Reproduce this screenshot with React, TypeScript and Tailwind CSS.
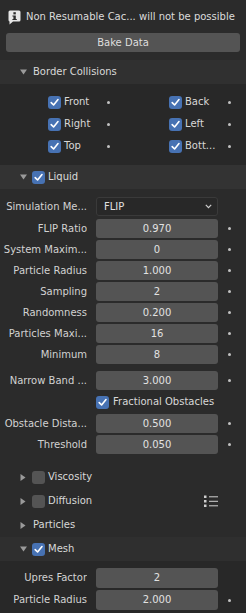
import React from "react";

const font = "font-['DejaVu_Sans',sans-serif]";

function Dot() {
  return <span className="block w-[3px] h-[3px] rounded-full bg-[#c2c2c2] shrink-0" />;
}

function Check({ on = true }: { on?: boolean }) {
  return (
    <span
      className={`flex items-center justify-center w-[13px] h-[13px] rounded-[3px] shrink-0 ${
        on ? "bg-[#4772b3]" : "bg-[#545454]"
      }`}
    >
      {on && (
        <svg width="11" height="11" viewBox="0 0 11 11">
          <path d="M2.2 5.6 L4.6 8 L9 2.6" fill="none" stroke="#fff" strokeWidth="1.6" strokeLinecap="round" strokeLinejoin="round" />
        </svg>
      )}
    </span>
  );
}

function Arrow({ open }: { open: boolean }) {
  return open ? (
    <svg width="7" height="6" viewBox="0 0 7 6" className="shrink-0">
      <path d="M0 0.5 H7 L3.5 5.5 Z" fill="#9a9a9a" />
    </svg>
  ) : (
    <svg width="6" height="7" viewBox="0 0 6 7" className="shrink-0">
      <path d="M0.5 0 V7 L5.5 3.5 Z" fill="#9a9a9a" />
    </svg>
  );
}

function Field({ label, value, dot = true, tall = false }: { label: string; value: string; dot?: boolean; tall?: boolean }) {
  return (
    <div className={`flex items-center ${tall ? "h-[20px]" : "h-[19px]"}`}>
      <div className="w-[87px] text-right whitespace-nowrap overflow-hidden text-[#d2d2d2]">{label}</div>
      <div className="ml-[9px] w-[122px] h-full rounded-[3px] bg-[#545454] flex items-center justify-center text-[#e2e2e2]">
        {value}
      </div>
      {dot && (
        <span className="ml-[10px]">
          <Dot />
        </span>
      )}
    </div>
  );
}

function BoxItem({ label }: { label: string }) {
  return (
    <div className="flex items-center w-[63px]">
      <Check />
      <span className="ml-[3px] flex-1 whitespace-nowrap text-[#d8d8d8]">{label}</span>
      <span className="mr-[1px]">
        <Dot />
      </span>
    </div>
  );
}

function SubHeader({ label, open = false, box, on = false, icon = false }: { label: string; open?: boolean; box?: boolean; on?: boolean; icon?: boolean }) {
  return (
    <div className={`flex items-center h-[24px] pl-[20px] ${open ? "bg-[#2f2f2f]" : ""}`}>
      <span className="w-[12px] flex items-center">
        <Arrow open={open} />
      </span>
      {box ? (
        <>
          <Check on={on} />
          <span className="ml-[3px] text-[#d8d8d8]">{label}</span>
        </>
      ) : (
        <span className="ml-[1px] text-[#d8d8d8]">{label}</span>
      )}
      {icon && (
        <svg width="15" height="14" viewBox="0 0 15 14" className="ml-auto mr-[28px]">
          <rect x="1" y="1.5" width="2.5" height="2.5" fill="#d0d0d0" />
          <rect x="1" y="6" width="2.5" height="2.5" fill="#d0d0d0" />
          <rect x="1" y="10.5" width="2.5" height="2.5" fill="#d0d0d0" />
          <rect x="6" y="2.3" width="9" height="1" fill="#d0d0d0" />
          <rect x="6" y="6.8" width="9" height="1" fill="#d0d0d0" />
          <rect x="6" y="11.3" width="9" height="1" fill="#d0d0d0" />
        </svg>
      )}
    </div>
  );
}

export default function App() {
  return (
    <div className={`w-[246px] h-[613px] overflow-hidden bg-[#2b2b2b] text-[10px] leading-none ${font}`}>
      <div className="flex items-center h-[26px] mt-[4px] pl-[8px]">
        <svg width="13" height="15" viewBox="0 0 13 15" className="shrink-0">
          <path d="M2 0.5 H11 Q12.5 0.5 12.5 2 V10 Q12.5 11.5 11 11.5 H5 L1.5 14.5 V11.5 Q0.5 11.2 0.5 10 V2 Q0.5 0.5 2 0.5 Z" fill="#e6e6e6" />
          <rect x="5.4" y="2.2" width="2.4" height="2.2" fill="#2b2b2b" />
          <path d="M4.4 5.4 H7.8 V8.9 H8.8 V10 H4.4 V8.9 H5.4 V6.5 H4.4 Z" fill="#2b2b2b" />
        </svg>
        <span className="ml-[5px] whitespace-nowrap text-[#dcdcdc]">Non Resumable Cac... will not be possible</span>
      </div>

      <div className="mx-[6px] mt-[3px] h-[19px] rounded-[3px] bg-[#545454] flex items-center justify-center text-[#dedede]">
        Bake Data
      </div>

      <div className="mt-[8px] h-[24px] bg-[#303030] flex items-center pl-[20px]">
        <span className="w-[13px] flex items-center">
          <Arrow open />
        </span>
        <span className="text-[#d8d8d8]">Border Collisions</span>
      </div>

      <div className="bg-[#282828] pt-[7px] pb-[8px]">
        {[
          ["Front", "Back"],
          ["Right", "Left"],
          ["Top", "Bott..."],
        ].map(([a, b], i) => (
          <div key={i} className="flex items-center h-[22px] pl-[48px]">
            <BoxItem label={a} />
            <div className="ml-[58px]">
              <BoxItem label={b} />
            </div>
          </div>
        ))}
      </div>

      <div className="h-[24px] bg-[#333333] flex items-center pl-[20px]">
        <span className="w-[12px] flex items-center">
          <Arrow open />
        </span>
        <Check />
        <span className="ml-[3px] text-[#dadada]">Liquid</span>
      </div>

      <div className="pt-[8px]">
        <div className="flex items-center h-[19px]">
          <div className="w-[87px] text-right whitespace-nowrap text-[#d2d2d2]">Simulation Me...</div>
          <div className="ml-[9px] w-[122px] h-full rounded-[3px] bg-[#282828] border border-[#3a3a3a] flex items-center pl-[7px] pr-[5px] text-[#e0e0e0]">
            <span className="flex-1">FLIP</span>
            <svg width="7" height="5" viewBox="0 0 7 5">
              <path d="M0.8 0.8 L3.5 3.6 L6.2 0.8" fill="none" stroke="#cfcfcf" strokeWidth="1.2" />
            </svg>
          </div>
        </div>
        <div className="flex flex-col gap-[2px] mt-[3px]">
          <Field label="FLIP Ratio" value="0.970" />
          <Field label="System Maxim..." value="0" />
          <Field label="Particle Radius" value="1.000" />
          <Field label="Sampling" value="2" />
          <Field label="Randomness" value="0.200" />
          <Field label="Particles Maxi..." value="16" />
          <Field label="Minimum" value="8" />
        </div>
        <div className="flex flex-col gap-[2px] mt-[7px]">
          <Field label="Narrow Band ..." value="3.000" />
          <div className="flex items-center h-[20px] pl-[96px]">
            <Check />
            <span className="ml-[4px] text-[#d8d8d8]">Fractional Obstacles</span>
          </div>
          <Field label="Obstacle Dista..." value="0.500" />
          <Field label="Threshold" value="0.050" />
        </div>

        <div className="mt-[11px]">
          <SubHeader label="Viscosity" box />
          <SubHeader label="Diffusion" box icon />
          <SubHeader label="Particles" />
          <SubHeader label="Mesh" open box on />
        </div>

        <div className="bg-[#282828] pt-[7px] pb-[10px] flex flex-col gap-[2px]">
          <Field label="Upres Factor" value="2" dot={false} tall />
          <Field label="Particle Radius" value="2.000" tall />
        </div>
      </div>
    </div>
  );
}
